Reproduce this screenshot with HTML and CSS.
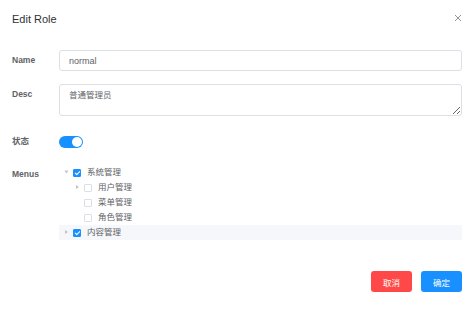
FILE: index.html
```html
<!DOCTYPE html>
<html lang="en">
<head>
    <meta charset="UTF-8">
    <meta name="viewport" content="width=device-width, initial-scale=1.0">
    <title>Edit Role</title>
    <link rel="stylesheet" href="styles.css">
</head>
<body>
    <div class="dialog">
        <div class="dialog-header">
            <span class="dialog-title">Edit Role</span>
            <button class="dialog-close" type="button">
                <svg width="8" height="8" viewBox="0 0 8 8"><path d="M1 1L7 7M7 1L1 7" stroke="#909399" stroke-width="1" fill="none"/></svg>
            </button>
        </div>

        <form class="form">
            <div class="form-item">
                <label class="form-label">Name</label>
                <div class="form-content">
                    <input class="input" type="text" value="normal">
                </div>
            </div>
            <div class="form-item form-item-desc">
                <label class="form-label">Desc</label>
                <div class="form-content">
                    <textarea class="textarea">普通管理员</textarea>
                </div>
            </div>
            <div class="form-item">
                <label class="form-label">状态</label>
                <div class="form-content">
                    <span class="switch"><span class="switch-dot"></span></span>
                </div>
            </div>
            <div class="form-item form-item-menus">
                <label class="form-label">Menus</label>
                <div class="form-content">
                    <div class="tree">
                        <div class="tree-node">
                            <span class="caret open"></span>
                            <span class="checkbox checked"></span>
                            <span class="tree-label">系统管理</span>
                        </div>
                        <div class="tree-node level-2">
                            <span class="caret"></span>
                            <span class="checkbox"></span>
                            <span class="tree-label">用户管理</span>
                        </div>
                        <div class="tree-node level-2">
                            <span class="caret leaf"></span>
                            <span class="checkbox"></span>
                            <span class="tree-label">菜单管理</span>
                        </div>
                        <div class="tree-node level-2">
                            <span class="caret leaf"></span>
                            <span class="checkbox"></span>
                            <span class="tree-label">角色管理</span>
                        </div>
                        <div class="tree-node current">
                            <span class="caret"></span>
                            <span class="checkbox checked"></span>
                            <span class="tree-label">内容管理</span>
                        </div>
                    </div>
                </div>
            </div>
        </form>

        <div class="dialog-footer">
            <button class="btn btn-danger" type="button">取消</button>
            <button class="btn btn-primary" type="button">确定</button>
        </div>
    </div>
</body>
</html>
```

FILE: styles.css
```css
body {
    margin: 0;
    background: #fff;
    font-family: "Liberation Sans", "Noto Sans CJK SC", sans-serif;
    color: #606266;
}

.dialog {
    width: 474px;
    height: 310px;
    padding: 0 12px;
    box-sizing: border-box;
}

.dialog-header {
    display: flex;
    justify-content: space-between;
    align-items: center;
    padding-top: 12px;
    height: 14px;
}

.dialog-title {
    font-size: 11px;
    line-height: 14px;
    color: #303133;
}

.dialog-close {
    border: none;
    background: none;
    padding: 0;
    width: 8px;
    height: 8px;
    margin-top: -2px;
    display: flex;
}

.form {
    margin-top: 24px;
}

.form-item {
    display: flex;
    margin-bottom: 13px;
}

.form-item-desc {
    margin-bottom: 15px;
}

.form-label {
    width: 47px;
    flex-shrink: 0;
    font-size: 8.5px;
    font-weight: bold;
    line-height: 21px;
    color: #606266;
}

.form-item-menus .form-label {
    line-height: 18px;
}

.form-content {
    flex: 1;
    display: flex;
    align-items: center;
    min-height: 21px;
}

.input,
.textarea {
    width: 100%;
    box-sizing: border-box;
    border: 1px solid #dcdfe6;
    border-radius: 3px;
    font-family: "Liberation Sans", "Noto Sans CJK SC", sans-serif;
    font-size: 9px;
    color: #606266;
    padding: 0 9px;
    outline: none;
}

.input {
    height: 21px;
}

.textarea {
    height: 32px;
    padding: 4px 9px;
    font-size: 8.5px;
    line-height: 12px;
    display: block;
}

.switch {
    position: relative;
    width: 24px;
    height: 12px;
    border-radius: 6px;
    background: #1890ff;
}

.switch-dot {
    position: absolute;
    top: 1px;
    right: 1px;
    width: 10px;
    height: 10px;
    border-radius: 50%;
    background: #fff;
}

.tree {
    width: 100%;
}

.tree-node {
    display: flex;
    align-items: center;
    height: 15px;
    padding-left: 3px;
    font-size: 8.5px;
    color: #606266;
}

.tree-node.level-2 {
    padding-left: 14px;
}

.tree-node.current {
    background: #f5f7fa;
}

.caret {
    width: 10px;
    height: 15px;
    position: relative;
}

.caret::before {
    content: "";
    position: absolute;
    left: 3px;
    top: 5px;
    border-style: solid;
    border-width: 2.5px 0 2.5px 3.5px;
    border-color: transparent transparent transparent #c0c4cc;
}

.caret.open::before {
    transform: rotate(90deg);
}

.caret.leaf::before {
    display: none;
}

.checkbox {
    width: 8px;
    height: 8px;
    box-sizing: border-box;
    border: 1px solid #dcdfe6;
    border-radius: 1px;
    background: #fff;
    margin-left: 1px;
    margin-right: 6px;
    position: relative;
}

.checkbox.checked {
    background: #1890ff;
    border-color: #1890ff;
}

.checkbox.checked::after {
    content: "";
    position: absolute;
    left: 2px;
    top: 0;
    width: 2px;
    height: 4px;
    border: solid #fff;
    border-width: 0 1px 1px 0;
    transform: rotate(45deg);
}

.tree-label {
    line-height: 15px;
}

.dialog-footer {
    display: flex;
    justify-content: flex-end;
    gap: 9px;
    margin-top: 31px;
}

.btn {
    width: 41px;
    height: 21px;
    border: none;
    border-radius: 3px;
    color: #fff;
    font-family: "Liberation Sans", "Noto Sans CJK SC", sans-serif;
    font-size: 8.5px;
    padding: 0;
}

.btn-danger {
    background: #ff4949;
}

.btn-primary {
    background: #1890ff;
}
```
